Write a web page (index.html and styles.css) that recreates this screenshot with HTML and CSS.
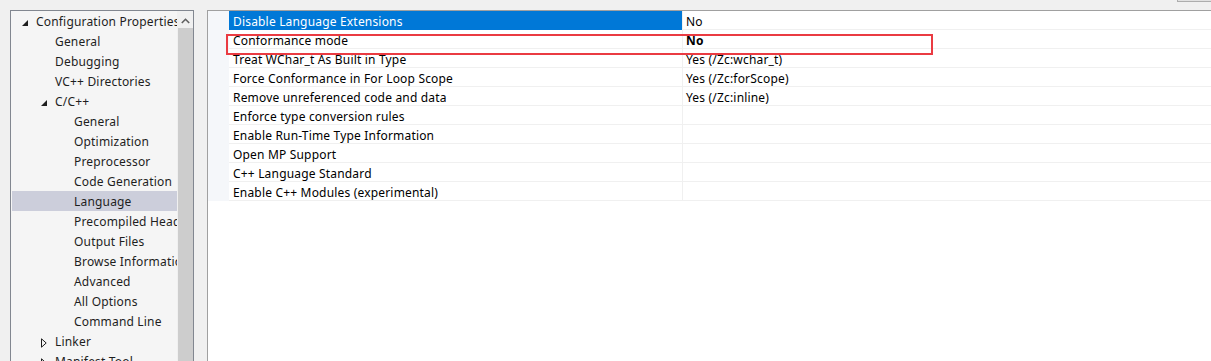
FILE: index.html
```html
<!DOCTYPE html>
<html>
<head>
<meta charset="utf-8">
<link rel="stylesheet" href="styles.css">
</head>
<body>
<div class="topbar"><div class="btn-edge"></div></div>
<div class="main">
  <div class="tree-panel">
    <div class="tree">
      <div class="item l0"><svg class="exp" viewBox="0 0 6 6"><path d="M6 0V6H0Z"/></svg>Configuration Properties</div>
      <div class="item l1">General</div>
      <div class="item l1">Debugging</div>
      <div class="item l1">VC++ Directories</div>
      <div class="item l1"><svg class="exp" viewBox="0 0 6 6"><path d="M6 0V6H0Z"/></svg>C/C++</div>
      <div class="item l2">General</div>
      <div class="item l2">Optimization</div>
      <div class="item l2">Preprocessor</div>
      <div class="item l2">Code Generation</div>
      <div class="item l2 sel">Language</div>
      <div class="item l2">Precompiled Headers</div>
      <div class="item l2">Output Files</div>
      <div class="item l2">Browse Information</div>
      <div class="item l2">Advanced</div>
      <div class="item l2">All Options</div>
      <div class="item l2">Command Line</div>
      <div class="item l1"><svg class="col" viewBox="0 0 6 10"><path d="M0.5 0.8L5.2 5L0.5 9.2Z"/></svg>Linker</div>
      <div class="item l1"><svg class="col" viewBox="0 0 6 10"><path d="M0.5 0.8L5.2 5L0.5 9.2Z"/></svg>Manifest Tool</div>
    </div>
    <div class="scrollbar">
      <svg class="up" viewBox="0 0 9 6"><path d="M0.8 5L4.5 1.3L8.2 5"/></svg>
      <div class="thumb"></div>
    </div>
  </div>
  <div class="grid-panel">
    <div class="row selected"><div class="gut"></div><div class="name">Disable Language Extensions</div><div class="val">No</div></div>
    <div class="row"><div class="gut"></div><div class="name">Conformance mode</div><div class="val bold">No</div></div>
    <div class="row"><div class="gut"></div><div class="name">Treat WChar_t As Built in Type</div><div class="val">Yes (/Zc:wchar_t)</div></div>
    <div class="row"><div class="gut"></div><div class="name">Force Conformance in For Loop Scope</div><div class="val">Yes (/Zc:forScope)</div></div>
    <div class="row"><div class="gut"></div><div class="name">Remove unreferenced code and data</div><div class="val">Yes (/Zc:inline)</div></div>
    <div class="row"><div class="gut"></div><div class="name">Enforce type conversion rules</div><div class="val"></div></div>
    <div class="row"><div class="gut"></div><div class="name">Enable Run-Time Type Information</div><div class="val"></div></div>
    <div class="row"><div class="gut"></div><div class="name">Open MP Support</div><div class="val"></div></div>
    <div class="row"><div class="gut"></div><div class="name">C++ Language Standard</div><div class="val"></div></div>
    <div class="row"><div class="gut"></div><div class="name">Enable C++ Modules (experimental)</div><div class="val"></div></div>
    <div class="highlight-box"></div>
  </div>
</div>
</body>
</html>
```
FILE: styles.css
```css
html, body {
  margin: 0;
  padding: 0;
  height: 100%;
  overflow: hidden;
}
body {
  background: #f0f0f0;
  font-family: "Noto Sans", "Open Sans", sans-serif;
  font-size: 12px;
  letter-spacing: 0.18px;
  color: #1e1e1e;
}
.topbar {
  height: 10px;
  display: flex;
  justify-content: flex-end;
}
.btn-edge {
  width: 36px;
  height: 2px;
  margin-right: -2px;
  background: #e1e1e1;
  border-left: 1px solid #adadad;
  border-bottom: 1px solid #adadad;
  box-sizing: border-box;
}
.main {
  display: flex;
  padding-left: 10px;
  gap: 13px;
  height: 351px;
}
.tree-panel {
  width: 184px;
  height: 400px;
  box-sizing: border-box;
  border: 1px solid #828790;
  background: #f5f5f5;
  display: flex;
}
.tree {
  width: 166px;
  overflow: hidden;
}
.item {
  height: 20px;
  box-sizing: border-box;
  padding-top: 1px;
  line-height: 19px;
  white-space: nowrap;
  overflow: hidden;
  position: relative;
}
.item.l0 { padding-left: 25px; }
.item.l1 { padding-left: 44px; }
.item.l2 { padding-left: 63px; }
.item.sel { background: #cccedb; margin-left: 1px; padding-left: 62px; }
.exp {
  position: absolute;
  width: 6px;
  height: 6px;
  top: 9px;
  fill: #1e1e1e;
}
.l0 .exp { left: 11px; }
.l1 .exp { left: 30px; }
.col {
  position: absolute;
  width: 6px;
  height: 10px;
  top: 7px;
  left: 30px;
  fill: none;
  stroke: #1e1e1e;
  stroke-width: 1;
}
.scrollbar {
  width: 16px;
  background: #f0f0f0;
  display: flex;
  flex-direction: column;
  align-items: center;
}
.up {
  width: 9px;
  height: 6px;
  margin-top: 7px;
  margin-bottom: 4px;
  fill: none;
  stroke: #606060;
  stroke-width: 1.6;
}
.thumb {
  width: 15px;
  flex: 1;
  background: #cdcdcd;
}
.grid-panel {
  flex: 1;
  margin-right: -10px;
  background: #ffffff;
  border-left: 1px solid #a0a0a0;
  border-top: 1px solid #a0a0a0;
  position: relative;
}
.row {
  display: grid;
  grid-template-columns: 21px 453px 1fr;
  height: 19px;
  color: #000;
}
.gut {
  background: #f5f7fa;
}
.name, .val {
  box-sizing: border-box;
  padding-top: 3px;
  line-height: 15px;
  border-bottom: 1px solid #f0f0f0;
  white-space: nowrap;
}
.name {
  padding-left: 4px;
}
.val {
  padding-left: 3px;
  border-left: 1px solid #f0f0f0;
}
.row.selected .name {
  background: #0078d7;
  color: #ffffff;
  border-bottom-color: #0078d7;
}
.bold { font-weight: bold; }
.highlight-box {
  position: absolute;
  left: 18px;
  top: 23px;
  width: 707px;
  height: 21px;
  box-sizing: border-box;
  border: 2px solid #ea3b42;
}
```
